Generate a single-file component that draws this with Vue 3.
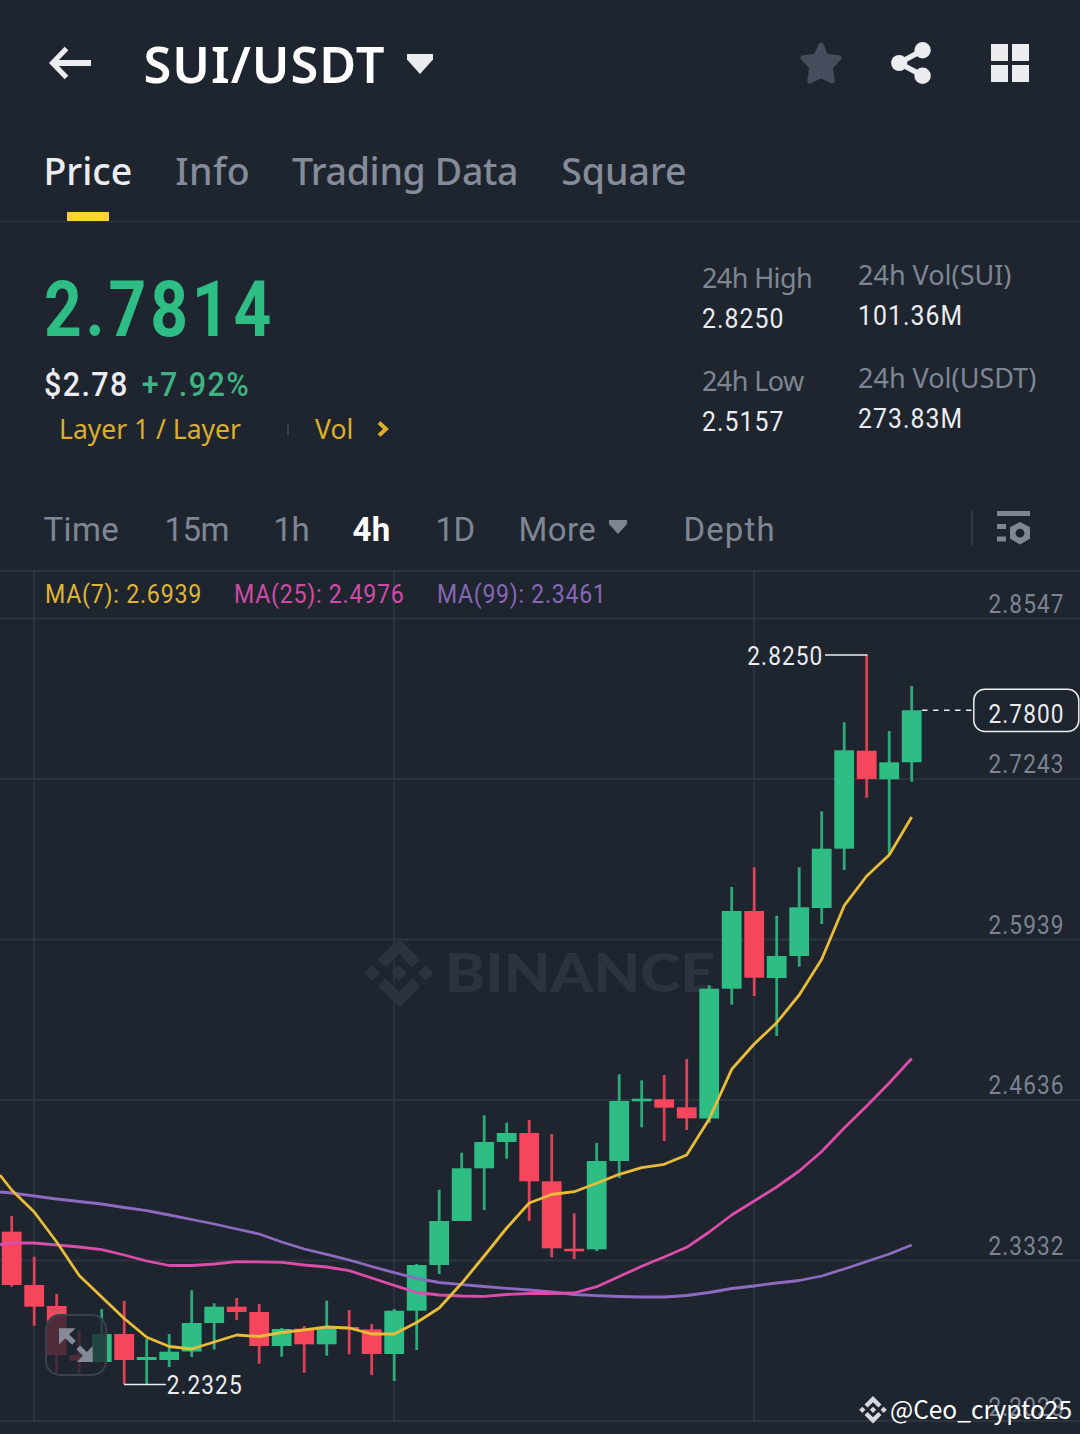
<template>
  <div class="page">
    <header class="topbar">
      <svg class="back" width="42" height="34" viewBox="0 0 42 34">
        <path d="M17.5 2.5 L3.5 17 L17.5 31.5" fill="none" stroke="#eaecf0" stroke-width="5.2" />
        <path d="M4 17 H42" stroke="#eaecf0" stroke-width="6" />
      </svg>
      <h1 class="pair">SUI/USDT</h1>
      <svg class="pair-caret" width="26" height="20" viewBox="0 0 26 20">
        <path d="M0 0 H26 V5.5 L13 20 L0 5.5 Z" fill="#eaecf0" />
      </svg>
      <div class="actions">
        <svg width="42" height="42" viewBox="0 0 42 42">
          <path
            d="M21 3 L26 14.2 L39 15.8 L30.2 25.2 L32.2 39 L21 33.8 L9.8 39 L11.8 25.2 L3 15.8 L16 14.2 Z"
            fill="#474d5c"
            stroke="#474d5c"
            stroke-width="5"
            stroke-linejoin="round"
          />
        </svg>
        <svg class="share" width="40" height="42" viewBox="0 0 40 42">
          <path d="M31.5 8.3 L8.2 21 L31.5 33.7" fill="none" stroke="#eaecf0" stroke-width="5.4" />
          <circle cx="8.2" cy="21" r="8.1" fill="#eaecf0" />
          <circle cx="31.6" cy="8.3" r="8.2" fill="#eaecf0" />
          <circle cx="31.6" cy="33.7" r="8.2" fill="#eaecf0" />
        </svg>
        <svg class="grid-icon" width="38" height="38" viewBox="0 0 38 38">
          <path d="M0 0H17V17H0Z M21 0H38V17H21Z M0 21H17V38H0Z M21 21H38V38H21Z" fill="#eaecf0" />
        </svg>
      </div>
    </header>

    <nav class="tabs">
      <a
        v-for="tab in tabs"
        :key="tab"
        class="tab"
        :class="{ active: tab === activeTab }"
        @click="activeTab = tab"
      >{{ tab }}</a>
    </nav>

    <section class="summary">
      <div class="quote">
        <div class="last-price">2.7814</div>
        <div class="fiat">
          <span class="usd">$2.78</span>
          <span class="change">+7.92%</span>
        </div>
        <div class="tags">
          <span>Layer 1 / Layer</span>
          <i class="tag-divider"></i>
          <span>Vol</span>
          <svg class="chevron" width="12" height="16" viewBox="0 0 12 16">
            <path d="M2 1.5 L9 8 L2 14.5" fill="none" stroke="#dcae2c" stroke-width="4" />
          </svg>
        </div>
      </div>
      <div v-for="(column, i) in stats" :key="i" class="stats" :class="'stats-' + i">
        <div v-for="stat in column" :key="stat.label" class="stat">
          <div class="stat-label">{{ stat.label }}</div>
          <div class="stat-value">{{ stat.value }}</div>
        </div>
      </div>
    </section>

    <div class="periods">
      <span
        v-for="period in periods"
        :key="period"
        class="period"
        :class="{ active: period === activePeriod }"
        @click="activePeriod = period"
      >
        {{ period }}
        <svg v-if="period === 'More'" class="more-caret" width="18" height="14" viewBox="0 0 18 14">
          <path d="M0 0 H18 V4 L9 14 L0 4 Z" fill="#7f8693" />
        </svg>
      </span>
      <i class="period-divider"></i>
      <svg class="settings" width="33" height="34" viewBox="0 0 33 34">
        <path d="M0 0H33V5H0Z M0 13H9V18H0Z M0 25.5H9V30.5H0Z" fill="#7f8693" />
        <path
          d="M23 11 L33 16.3 V27.7 L23 33.5 L13 27.7 V16.3 Z M23 17.8 A4.4 4.4 0 1 0 23 26.6 A4.4 4.4 0 1 0 23 17.8 Z"
          fill="#7f8693"
          fill-rule="evenodd"
        />
      </svg>
    </div>

    <svg class="chart" width="1080" height="864" viewBox="0 570 1080 864">
      <!-- grid -->
      <g stroke="#2d343f" stroke-width="1.8">
        <line x1="0" x2="1080" y1="571" y2="571" />
        <line v-for="y in gridY" :key="'h' + y" x1="0" x2="1080" :y1="y" :y2="y" />
        <line v-for="x in gridX" :key="'v' + x" :x1="x" :x2="x" y1="571" y2="1421" />
      </g>

      <!-- watermark -->
      <g fill="#2c333e">
        <path :d="logoPath" transform="translate(364.5 938.5) scale(0.545)" />
        <text x="445" y="992.3" class="watermark" textLength="270" lengthAdjust="spacingAndGlyphs">BINANCE</text>
      </g>

      <!-- candles -->
      <g v-for="(c, i) in candles" :key="i" :fill="c[0] ? '#2ebd85' : '#f6465d'">
        <rect :x="centerX(i) - 1.4" :y="c[1]" width="2.8" :height="c[4] - c[1]" opacity="0.88" />
        <rect :x="centerX(i) - 9.9" :y="c[2]" width="19.8" :height="c[3] - c[2]" />
      </g>

      <!-- moving averages -->
      <g fill="none" stroke-width="2.8" stroke-linejoin="round">
        <polyline :points="ma99" stroke="#8d6bc0" />
        <polyline :points="ma25" stroke="#dc4cab" />
        <polyline :points="ma7" stroke="#e8bc38" />
      </g>
      <g class="ma-legend">
        <text x="45" y="603" fill="#dfb534" textLength="157" lengthAdjust="spacingAndGlyphs">MA(7): 2.6939</text>
        <text x="234" y="603" fill="#cf4ba5" textLength="170.5" lengthAdjust="spacingAndGlyphs">MA(25): 2.4976</text>
        <text x="437" y="603" fill="#8567b4" textLength="169.5" lengthAdjust="spacingAndGlyphs">MA(99): 2.3461</text>
      </g>

      <!-- high and low markers -->
      <g class="marker">
        <path d="M825 655 H867.5 M124 1384.5 H166" stroke="#eaecf0" stroke-width="1.6" />
        <text x="747.3" y="664.7" textLength="76" lengthAdjust="spacingAndGlyphs">2.8250</text>
        <text x="166.7" y="1394" textLength="76" lengthAdjust="spacingAndGlyphs">2.2325</text>
      </g>

      <!-- price axis -->
      <g class="axis">
        <text
          v-for="row in axis"
          :key="row.label"
          x="988.5"
          :y="row.y"
          textLength="76"
          lengthAdjust="spacingAndGlyphs"
        >{{ row.label }}</text>
      </g>
      <path d="M922 710.3 H974" stroke="#eaecf0" stroke-width="1.6" stroke-dasharray="5.5 5.5" />
      <rect x="973.8" y="689.2" width="105" height="42.2" rx="11" fill="#1f252f" stroke="#eaecf0" stroke-width="1.5" />
      <text class="current" x="988.5" y="722.7" textLength="76" lengthAdjust="spacingAndGlyphs">2.7800</text>

      <!-- expand button -->
      <rect x="46" y="1315" width="60" height="60" rx="14" fill="#1f252f" fill-opacity="0.78" stroke="#3b414b" stroke-width="2" />
      <g fill="#848a95">
        <path d="M59 1328.3 H75.5 L59 1344.5 Z M92.7 1346 V1362 H76.8 Z" />
        <path d="M65 1334.3 L74 1342.7 M78.3 1347.3 L87 1356" stroke="#848a95" stroke-width="5.4" />
      </g>

      <!-- author signature -->
      <path :d="logoPath" transform="translate(859.2 1396) scale(0.218)" fill="#d5d8dc" />
      <text class="signature" x="890" y="1418.7" textLength="182" lengthAdjust="spacingAndGlyphs">@Ceo_crypto25</text>
    </svg>
  </div>
</template>

<script setup>
import { ref } from 'vue';

const tabs = ['Price', 'Info', 'Trading Data', 'Square'];
const activeTab = ref('Price');

const periods = ['Time', '15m', '1h', '4h', '1D', 'More', 'Depth'];
const activePeriod = ref('4h');

const stats = [
  [
    { label: '24h High', value: '2.8250' },
    { label: '24h Low', value: '2.5157' }
  ],
  [
    { label: '24h Vol(SUI)', value: '101.36M' },
    { label: '24h Vol(USDT)', value: '273.83M' }
  ]
];

const gridX = [34, 394, 754];
const gridY = [618.5, 779, 939.5, 1100, 1260.5, 1421];

const axis = [
  { label: '2.8547', y: 613 },
  { label: '2.7243', y: 773.3 },
  { label: '2.5939', y: 934 },
  { label: '2.4636', y: 1094.3 },
  { label: '2.3332', y: 1255 },
  { label: '2.2028', y: 1415.5 }
];

// [rising, wick top, body top, body bottom, wick bottom]
const candles = [
  [0, 1216, 1231.7, 1285, 1286.7],
  [0, 1256.7, 1285, 1306.7, 1325.7],
  [0, 1294, 1306, 1355, 1372.7],
  [0, 1330.7, 1355, 1360.7, 1372.7],
  [1, 1309, 1334, 1362, 1362],
  [0, 1301, 1334, 1360, 1384],
  [1, 1339, 1357, 1360, 1384],
  [1, 1334, 1351.7, 1360, 1367],
  [1, 1290.3, 1323, 1351.5, 1357],
  [1, 1303.3, 1306.7, 1323, 1349.5],
  [0, 1298, 1306.7, 1312, 1320],
  [0, 1304, 1312, 1346, 1363.7],
  [1, 1328, 1329, 1346, 1356.7],
  [0, 1326, 1328.7, 1344.3, 1372.7],
  [1, 1300.7, 1328, 1344.3, 1355.7],
  [0, 1310, 1327, 1329.3, 1354.3],
  [0, 1324, 1329.3, 1354, 1375],
  [1, 1309, 1310.7, 1354, 1381],
  [1, 1264, 1265, 1310.7, 1350],
  [1, 1189.7, 1221, 1265, 1274],
  [1, 1152.7, 1168.3, 1221, 1221],
  [1, 1115.3, 1142, 1168.3, 1210],
  [1, 1122.7, 1133, 1142, 1158.7],
  [0, 1120, 1133, 1181.3, 1221],
  [0, 1134, 1181.3, 1248.3, 1257.3],
  [0, 1213.3, 1248.7, 1251.3, 1259],
  [1, 1143, 1161, 1249.3, 1251],
  [1, 1074.3, 1101, 1161, 1178],
  [1, 1080.3, 1098.7, 1101.3, 1127.3],
  [0, 1075, 1099.3, 1107.7, 1141],
  [0, 1059, 1107.3, 1118.3, 1130],
  [1, 985.3, 988.7, 1118.5, 1123],
  [1, 887, 911, 988.7, 1004.7],
  [0, 867.3, 911, 977.7, 996],
  [1, 915.7, 956, 978, 1036],
  [1, 867.3, 907.3, 956, 966.7],
  [1, 811.3, 848.7, 908, 924],
  [1, 722.3, 750.3, 848.7, 870],
  [0, 655, 750.7, 779, 797.7],
  [1, 731, 762.3, 779.3, 854],
  [1, 686, 710.3, 762.3, 781.7]
];

const centerX = (i) => 11.7 + 22.5 * i;

// One value per candle, preceded by the value on the left edge
const toPoints = (edge, values) =>
  [`0,${edge}`, ...values.map((y, i) => `${centerX(i)},${y}`)].join(' ');

const ma7 = toPoints(1175, [
  1190, 1212, 1242, 1275.5, 1297, 1318.5, 1337.3, 1346.5, 1349, 1342, 1335, 1336.5, 1332.5, 1330,
  1327, 1328, 1334, 1334, 1322.5, 1308, 1283.3, 1256, 1228, 1203, 1194.5, 1191.7, 1183.3, 1174.3,
  1167.7, 1164.3, 1155, 1119, 1069.3, 1044, 1022.7, 995, 959.3, 905.7, 876, 855, 817
]);

const ma25 = toPoints(1244.5, [
  1243, 1243, 1245, 1247, 1249.7, 1255, 1261, 1265.5, 1265.5, 1264, 1261.7, 1261.8, 1262.3, 1265,
  1267, 1270.7, 1278, 1285.3, 1292.5, 1295, 1296, 1296.3, 1294.5, 1293.5, 1293.5, 1293, 1286.7,
  1276.5, 1266.3, 1257, 1247.3, 1232, 1215, 1201, 1187, 1171, 1151.5, 1128, 1106, 1083, 1058.5
]);

const ma99 = toPoints(1192, [
  1193, 1196, 1199, 1201.5, 1204, 1207.5, 1210.7, 1215, 1219.5, 1224, 1229, 1234, 1242, 1249,
  1254.3, 1260, 1266.5, 1272.7, 1278.3, 1282.5, 1284.7, 1286.5, 1288.3, 1290, 1292, 1294.5, 1295.7,
  1296.5, 1297, 1297, 1295.5, 1292.5, 1288.5, 1286, 1283, 1280.5, 1276, 1269, 1261.5, 1254, 1245
]);

const logoPath =
  'M38.7 53.2 L63.3 28.6 L87.9 53.2 L102.2 38.9 L63.3 0 L24.4 38.9 Z ' +
  'M0 63.3 L14.3 49 L28.6 63.3 L14.3 77.6 Z ' +
  'M38.7 73.4 L63.3 98 L87.9 73.4 L102.2 87.7 L63.3 126.6 L24.4 87.7 Z ' +
  'M98 63.3 L112.3 49 L126.6 63.3 L112.3 77.6 Z ' +
  'M77.8 63.3 L63.3 48.8 L48.8 63.3 L63.3 77.8 Z';
</script>

<style>
body {
  background: #1f252f;
}
</style>

<style scoped>
.page {
  width: 1080px;
  height: 1434px;
  overflow: hidden;
  background: #1f252f;
  color: #eaecf0;
  font-family: "Noto Sans", sans-serif;
}

.topbar {
  display: flex;
  align-items: center;
  height: 126px;
  padding: 0 51px 0 49px;
}

.pair {
  margin: 1px 0 0 52.5px;
  width: 241.5px;
  font-size: 50.5px;
  line-height: 70px;
  font-weight: 600;
  letter-spacing: 1px;
  color: #ffffff;
  white-space: nowrap;
}

.pair-caret {
  margin-left: 22px;
  margin-top: 2px;
}

.actions {
  display: flex;
  align-items: center;
  margin-left: auto;
}

.share {
  margin-left: 49px;
}

.grid-icon {
  margin-left: 60px;
}

.tabs {
  display: flex;
  gap: 43px;
  height: 95px;
  padding-left: 43.5px;
  border-bottom: 1px solid #303640;
}

.tab {
  position: relative;
  font-size: 37.5px;
  line-height: 89px;
  font-weight: 500;
  color: #858b98;
  white-space: nowrap;
}

.tab:nth-child(2) {
  letter-spacing: 0.4px;
}

.tab:nth-child(3) {
  margin-left: -1px;
  letter-spacing: -0.35px;
}

.tab.active {
  color: #eaecf0;
}

.tab.active::after {
  content: "";
  position: absolute;
  left: 50%;
  bottom: 0;
  width: 42px;
  height: 9px;
  margin-left: -21px;
  background: #f8d33a;
}

.summary {
  display: flex;
  height: 266px;
  padding-left: 44px;
}

.quote {
  width: 658px;
  padding-top: 48px;
}

.last-price {
  font-family: Roboto, sans-serif;
  font-size: 78px;
  line-height: 80px;
  font-weight: 700;
  color: #2ebd85;
  letter-spacing: 4.5px;
  transform: scaleX(0.845);
  transform-origin: left;
}

.fiat {
  display: flex;
  gap: 14px;
  margin-top: 15px;
  font-family: Roboto, sans-serif;
  font-size: 33px;
  line-height: 40px;
  font-weight: 500;
  letter-spacing: 1.5px;
  transform: scaleX(0.925);
  transform-origin: left;
}

.change {
  color: #3fb383;
}

.tags {
  display: flex;
  align-items: center;
  margin-top: 6px;
  padding-left: 15px;
  font-size: 26.5px;
  line-height: 36px;
  color: #dcae2c;
}

.tag-divider {
  width: 2px;
  height: 11px;
  margin: 0 26px 0 46px;
  background: #3a414c;
}

.chevron {
  margin-left: 24px;
}

.stats {
  display: flex;
  flex-direction: column;
  gap: 22px;
  padding-top: 36px;
}

.stats-0 {
  width: 156px;
}

.stats-1 {
  padding-top: 33px;
}

.stat-label {
  font-size: 27px;
  line-height: 40px;
  color: #7f8592;
  white-space: nowrap;
}

.stats-0 .stat-label {
  letter-spacing: -0.6px;
}

.stat-value {
  margin-top: 1px;
  font-family: Roboto, sans-serif;
  font-size: 27.5px;
  line-height: 40px;
  letter-spacing: 1.2px;
  transform: scaleX(0.9);
  transform-origin: left;
}

.periods {
  display: grid;
  grid-template-columns: 121px 109px 79px 83px 83px 165px 287px 26px 33px;
  align-items: center;
  height: 82px;
  padding-left: 43.5px;
  font-family: Roboto, sans-serif;
  font-size: 33px;
  color: #7f8693;
}

.period {
  white-space: nowrap;
  letter-spacing: 0.4px;
}

.period:nth-child(2),
.period:nth-child(3),
.period:nth-child(5) {
  letter-spacing: -0.6px;
}

.period:nth-child(7) {
  letter-spacing: 1.1px;
}

.period.active {
  color: #ffffff;
  font-weight: 700;
}

.more-caret {
  margin-left: 4px;
  vertical-align: 7px;
}

.period-divider {
  width: 2px;
  height: 34px;
  margin-top: -3px;
  background: #343a45;
}

.settings {
  margin-top: -2px;
}

.chart {
  display: block;
}

.chart text {
  font-family: Roboto, sans-serif;
}

.chart .watermark {
  font-family: Lato, sans-serif;
  font-size: 53px;
  font-weight: 900;
}

.ma-legend text {
  font-size: 25px;
  letter-spacing: 0.8px;
}

.marker text,
.current {
  font-size: 25px;
  letter-spacing: 1.2px;
  fill: #eaecf0;
}

.axis text {
  font-size: 25px;
  letter-spacing: 1.2px;
  fill: #7d8390;
}

.chart .signature {
  font-family: "Noto Sans CJK SC", sans-serif;
  font-size: 25px;
  font-weight: 400;
  fill: #ffffff;
}
</style>
